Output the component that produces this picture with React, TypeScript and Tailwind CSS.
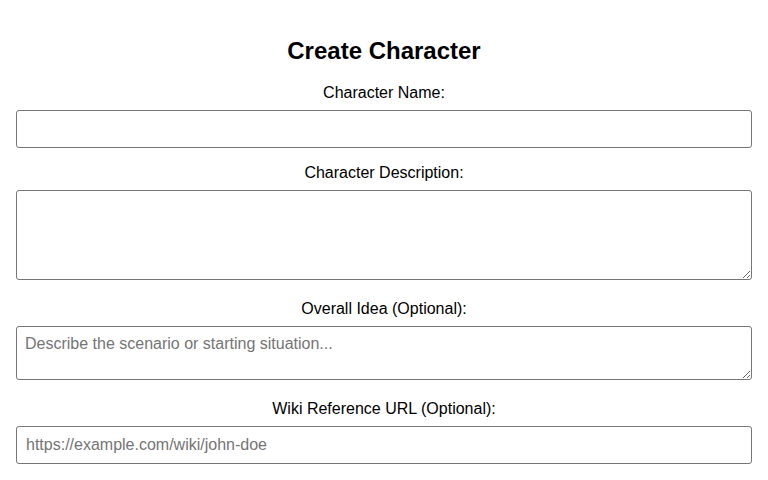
import React from "react";

const fieldBase =
  "block w-full border border-[#767676] rounded-[3px] bg-white px-2 text-base text-black placeholder:text-[#757575] outline-none";

export default function App() {
  return (
    <div className="min-h-screen bg-white font-['Liberation_Sans',Arial,sans-serif] text-black">
      <form className="flex flex-col px-4 pt-[37px]">
        <h1 className="text-center text-2xl font-bold leading-[28px] mb-[19px]">Create Character</h1>

        <label className="block text-center text-base leading-[18px] mb-[8px]">Character Name:</label>
        <input type="text" className={`${fieldBase} h-[38px]`} />

        <label className="block text-center text-base leading-[18px] mt-[16px] mb-[8px]">
          Character Description:
        </label>
        <textarea className={`${fieldBase} h-[90px] py-2`} />

        <label className="block text-center text-base leading-[18px] mt-[20px] mb-[8px]">
          Overall Idea (Optional):
        </label>
        <textarea
          className={`${fieldBase} h-[54px] py-2 leading-[18px]`}
          placeholder="Describe the scenario or starting situation..."
        />

        <label className="block text-center text-base leading-[18px] mt-[20px] mb-[8px]">
          Wiki Reference URL (Optional):
        </label>
        <input
          type="url"
          className={`${fieldBase} h-[38px] pl-[9px]`}
          placeholder="https://example.com/wiki/john-doe"
        />
      </form>
    </div>
  );
}
